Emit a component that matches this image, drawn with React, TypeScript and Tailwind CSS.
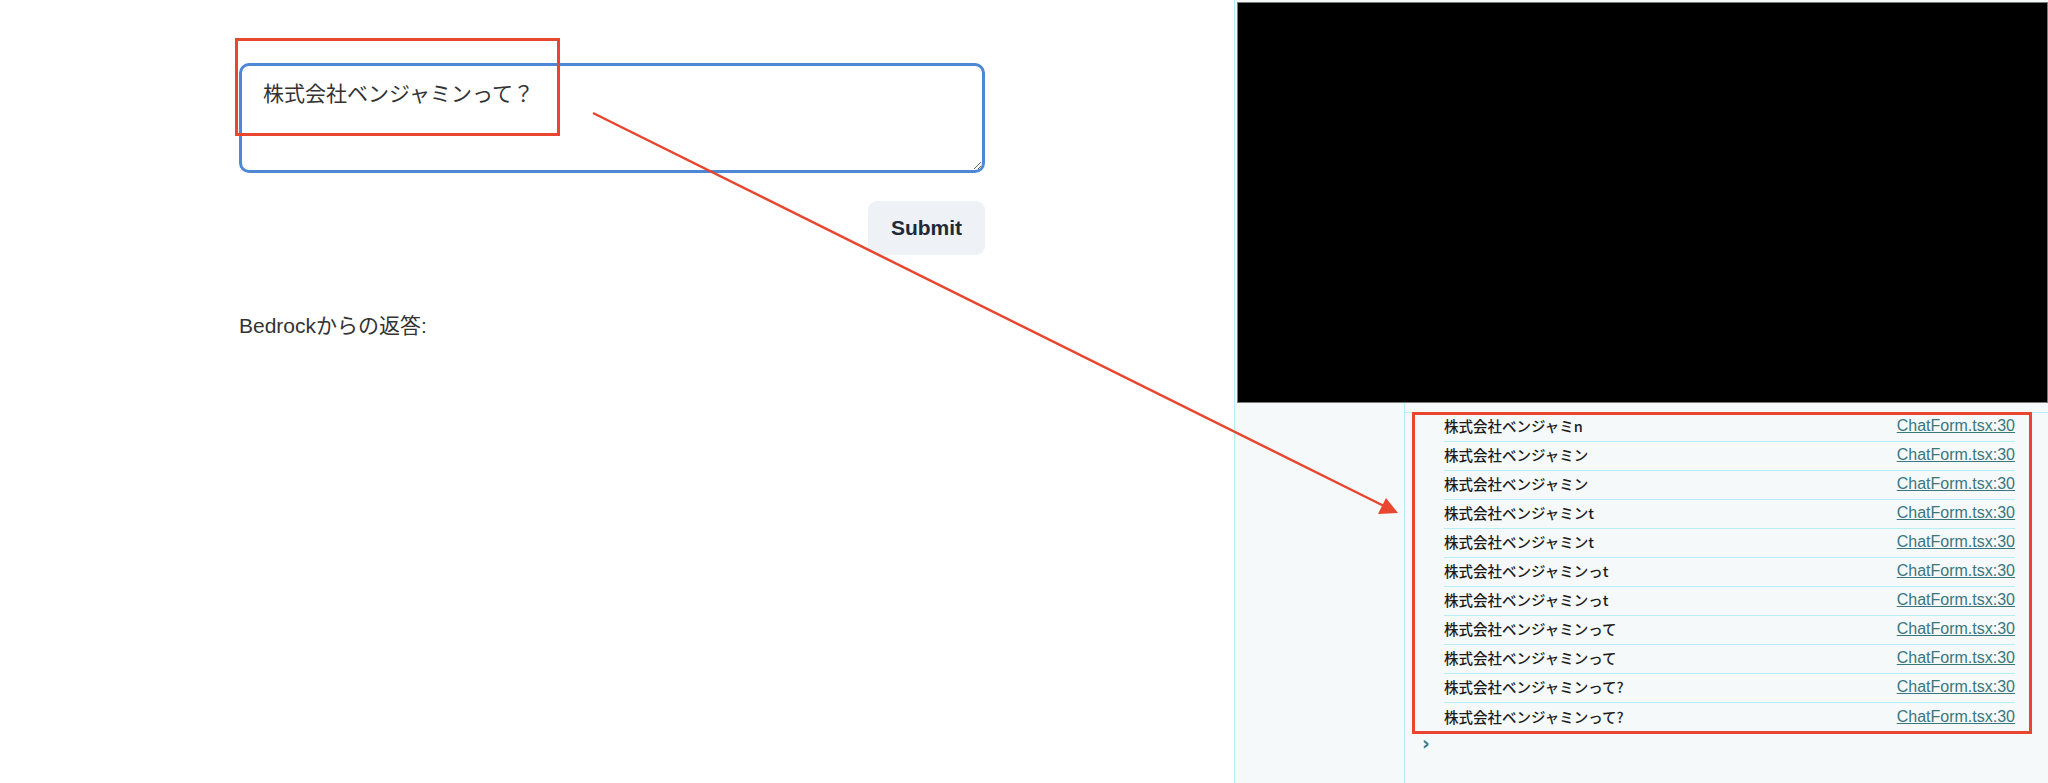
const LOGS = [
  "株式会社ベンジャミn",
  "株式会社ベンジャミン",
  "株式会社ベンジャミン",
  "株式会社ベンジャミンt",
  "株式会社ベンジャミンt",
  "株式会社ベンジャミンっt",
  "株式会社ベンジャミンっt",
  "株式会社ベンジャミンって",
  "株式会社ベンジャミンって",
  "株式会社ベンジャミンって?",
  "株式会社ベンジャミンって?",
];

function ChatForm() {
  return (
    <div className="flex flex-col w-[746px] ml-[239px] pt-[63px] font-['Liberation_Sans','Noto_Sans_CJK_JP',sans-serif] text-[21px] text-[#333]">
      <textarea
        readOnly
        defaultValue="株式会社ベンジャミンって？"
        className="h-[110px] w-full border-[3px] border-[#4d87d5] rounded-[10px] pl-[21px] pt-[10px] leading-[32px] outline-none font-['Noto_Sans_CJK_JP',sans-serif] text-[21px] text-[#333] bg-white"
      />
      <div className="flex justify-end mt-[28px]">
        <button className="h-[54px] w-[117px] rounded-[9px] bg-[#eef1f5] font-bold text-[21px] text-[#1f2937]">
          Submit
        </button>
      </div>
      <p className="mt-[55px] leading-[32px]">Bedrockからの返答:</p>
    </div>
  );
}

function Console() {
  return (
    <div className="flex-1 flex flex-col bg-[#f6f9fa] border-l border-[#b5eef6] h-full">
      <div className="h-[401px] mt-[2px] ml-[2px] bg-black border border-[#7a7a7a]" />
      <div className="flex flex-1">
        <div className="w-[170px] border-r border-[#b5eef6]" />
        <div className="flex-1 pt-[9px]">
          <div className="border-t border-[#b5eef6]">
            {LOGS.map((line, i) => (
              <div
                key={i}
                className="flex items-center justify-between h-[29px] pb-[2px] ml-[39px] mr-[33px] border-b border-[#b5eef6] last:border-b-0"
              >
                <span className="font-['Noto_Sans_CJK_JP',sans-serif] font-medium text-[14.5px] text-[#1c1c1c]">
                  {line}
                </span>
                <span className="font-['Liberation_Sans',sans-serif] text-[16px] text-[#3a767e] underline">
                  ChatForm.tsx:30
                </span>
              </div>
            ))}
          </div>
          <div className="ml-[17px] -mt-[1px] text-[19px] font-bold leading-[24px] text-[#3a7f8a] font-['DejaVu_Sans',sans-serif]">
            ›
          </div>
        </div>
      </div>
    </div>
  );
}

export default function App() {
  return (
    <div className="relative flex w-[2048px] h-[783px] bg-white overflow-hidden">
      <div className="w-[1234px] shrink-0">
        <ChatForm />
      </div>
      <Console />

      {/* annotations */}
      <div className="absolute left-[235px] top-[38px] w-[325px] h-[98px] border-[3px] border-[#e8462e]" />
      <div className="absolute left-[1412px] top-[412px] w-[620px] h-[322px] border-[3px] border-[#e8462e]" />
      <svg className="absolute inset-0 pointer-events-none" width="2048" height="783">
        <line x1="593" y1="113" x2="1384" y2="506" stroke="#e8462e" strokeWidth="2.5" />
        <polygon points="1398,513 1378,514 1386,498" fill="#e8462e" />
      </svg>
    </div>
  );
}
